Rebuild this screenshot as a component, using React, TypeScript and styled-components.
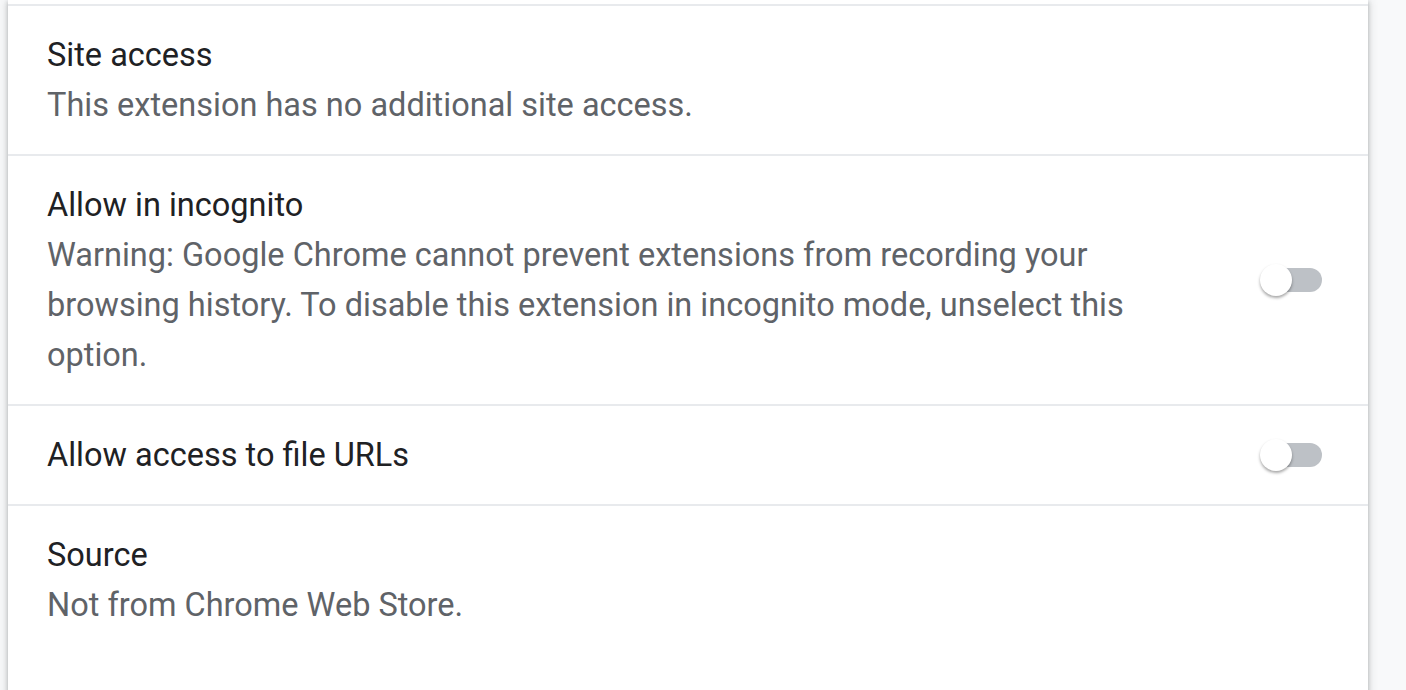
import styled, { createGlobalStyle } from 'styled-components'

interface Setting {
  key: string,
  title: string,
  lines: string[],
  toggle: boolean,
}

const settings: Setting[] = [
  { key: 'site', title: 'Site access', lines: ['This extension has no additional site access.'], toggle: false },
  {
    key: 'incognito',
    title: 'Allow in incognito',
    lines: ['Warning: Google Chrome cannot prevent extensions from recording your browsing history. To disable this extension in incognito mode, unselect this option.'],
    toggle: true,
  },
  { key: 'files', title: 'Allow access to file URLs', lines: [], toggle: true },
  { key: 'source', title: 'Source', lines: ['Not from Chrome Web Store.'], toggle: false },
]

const GlobalStyle = createGlobalStyle`
  html, body {
    margin: 0;
    padding: 0;
    background: #f8f9fa;
    font-family: Roboto, "Liberation Sans", Arial, sans-serif;
    overflow: hidden;
  }
`

const Page = styled.div`
  width: 1406px;
  height: 690px;
  overflow: hidden;
`

const Card = styled.div`
  margin-left: 8px;
  width: 1360px;
  min-height: 720px;
  padding-top: 4px;
  background: #fff;
  box-shadow: 0 2px 4px rgba(60, 64, 67, 0.3), 0 2px 8px 2px rgba(60, 64, 67, 0.15);
`

const Row = styled.div`
  display: flex;
  align-items: center;
  padding: 24px 46px 24px 39px;
  border-top: 2px solid #e8eaed;
`

const Text = styled.div`
  flex: 1;
  margin-right: 90px;
`

const Title = styled.div`
  font-size: 32.5px;
  line-height: 50px;
  color: #202124;
`

const Secondary = styled.div`
  font-size: 32.5px;
  line-height: 50px;
  color: #5f6368;
`

const Toggle = styled.div`
  position: relative;
  width: 62px;
  height: 32px;
  flex: none;
`

const Track = styled.div`
  position: absolute;
  left: 10px;
  right: 0;
  top: 4px;
  height: 24px;
  border-radius: 12px;
  background: #bdc1c6;
`

const Knob = styled.div`
  position: absolute;
  left: 0;
  top: 0;
  width: 32px;
  height: 32px;
  border-radius: 50%;
  background: #fff;
  box-shadow: 0 2px 3px rgba(0, 0, 0, 0.35);
`

function App() {
  return (
    <Page>
      <GlobalStyle />
      <Card>
        {settings.map((s) => (
          <Row key={s.key}>
            <Text>
              <Title>{s.title}</Title>
              {s.lines.map((line) => <Secondary key={line}>{line}</Secondary>)}
            </Text>
            {s.toggle && (
              <Toggle>
                <Track />
                <Knob />
              </Toggle>
            )}
          </Row>
        ))}
      </Card>
    </Page>
  )
}

export default App
